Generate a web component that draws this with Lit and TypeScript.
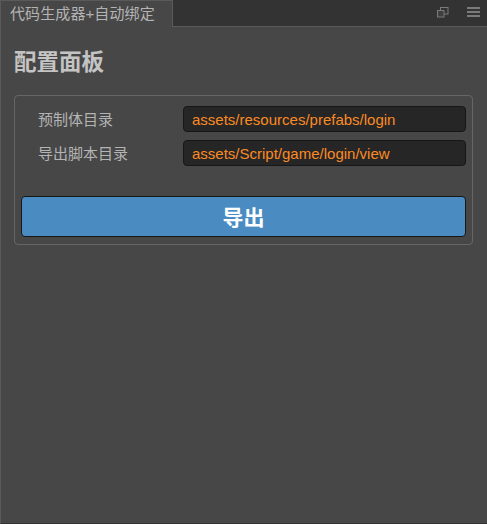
import { LitElement, html, css } from "lit";
import { customElement } from "lit/decorators.js";

@customElement("app-root")
export class AppRoot extends LitElement {
  static styles = css`
    :host {
      display: flex;
      flex-direction: column;
      width: 487px;
      height: 524px;
      box-sizing: border-box;
      background: #474747;
      border-left: 1px solid #5a5a5a;
      border-bottom: 1px solid #333;
      font-family: "Liberation Sans", "Noto Sans CJK SC", sans-serif;
      overflow: hidden;
    }
    .bar {
      display: flex;
      height: 27px;
      flex: none;
      background: #333;
      box-sizing: border-box;
      border-bottom: 1px solid #5a5a5a;
      align-items: flex-start;
    }
    .tab {
      width: 172px;
      height: 27px;
      box-sizing: border-box;
      background: #474747;
      border-right: 1px solid #5a5a5a;
      border-top: 1px solid #5a5a5a;
      color: #b4b4b4;
      font-size: 15px;
      letter-spacing: 0.1px;
      line-height: 26px;
      padding-left: 9px;
      white-space: nowrap;
    }
    .tools {
      margin-left: auto;
      display: flex;
      align-items: center;
      gap: 18px;
      height: 24px;
      padding-right: 7px;
    }
    svg { display: block; }
    .body { padding: 0 14px 0 13px; display: flex; flex-direction: column; }
    h1 {
      margin: 20px 0 0;
      font-size: 22.5px;
      line-height: 32px;
      font-weight: 700;
      color: #c4c4c4;
    }
    .panel {
      margin-top: 16px;
      height: 150px;
      box-sizing: border-box;
      border: 1px solid #666;
      border-radius: 4px;
      padding: 10px 6px 7px 6px;
      display: flex;
      flex-direction: column;
      gap: 8px;
    }
    .row {
      display: flex;
      align-items: center;
      height: 26px;
    }
    .row label {
      width: 162px;
      padding: 0 0 2px 17px;
      box-sizing: border-box;
      font-size: 15px;
      color: #b4b4b4;
      flex: none;
    }
    .field {
      flex: 1;
      height: 26px;
      box-sizing: border-box;
      background: #262626;
      border: 1px solid #171717;
      border-radius: 4px;
      color: #fb8b24;
      font-size: 15px;
      line-height: 25px;
      padding-left: 8px;
    }
    button {
      margin-top: auto;
      height: 41px;
      border: 1px solid #171717;
      border-radius: 4px;
      background: #4a8bc2;
      color: #fff;
      font: 700 21px "Liberation Sans", "Noto Sans CJK SC", sans-serif;
      padding: 0 0 2px;
    }
  `;

  render() {
    return html`
      <div class="bar">
        <div class="tab">代码生成器+自动绑定</div>
        <div class="tools">
          <svg width="12" height="11" viewBox="0 0 12 11" fill="none" stroke="#7a7a7a" stroke-width="1">
            <rect x="3.5" y="0.5" width="7.5" height="6.5"></rect>
            <rect x="0.5" y="3.5" width="6.5" height="6.5" fill="#3f3f3f"></rect>
          </svg>
          <svg width="13" height="10" viewBox="0 0 13 10" fill="#7a7a7a">
            <rect x="0" y="0" width="13" height="2"></rect>
            <rect x="0" y="4" width="13" height="2"></rect>
            <rect x="0" y="8" width="13" height="2"></rect>
          </svg>
        </div>
      </div>
      <div class="body">
        <h1>配置面板</h1>
        <div class="panel">
          <div class="row">
            <label>预制体目录</label>
            <div class="field">assets/resources/prefabs/login</div>
          </div>
          <div class="row">
            <label>导出脚本目录</label>
            <div class="field">assets/Script/game/login/view</div>
          </div>
          <button>导出</button>
        </div>
      </div>
    `;
  }
}
